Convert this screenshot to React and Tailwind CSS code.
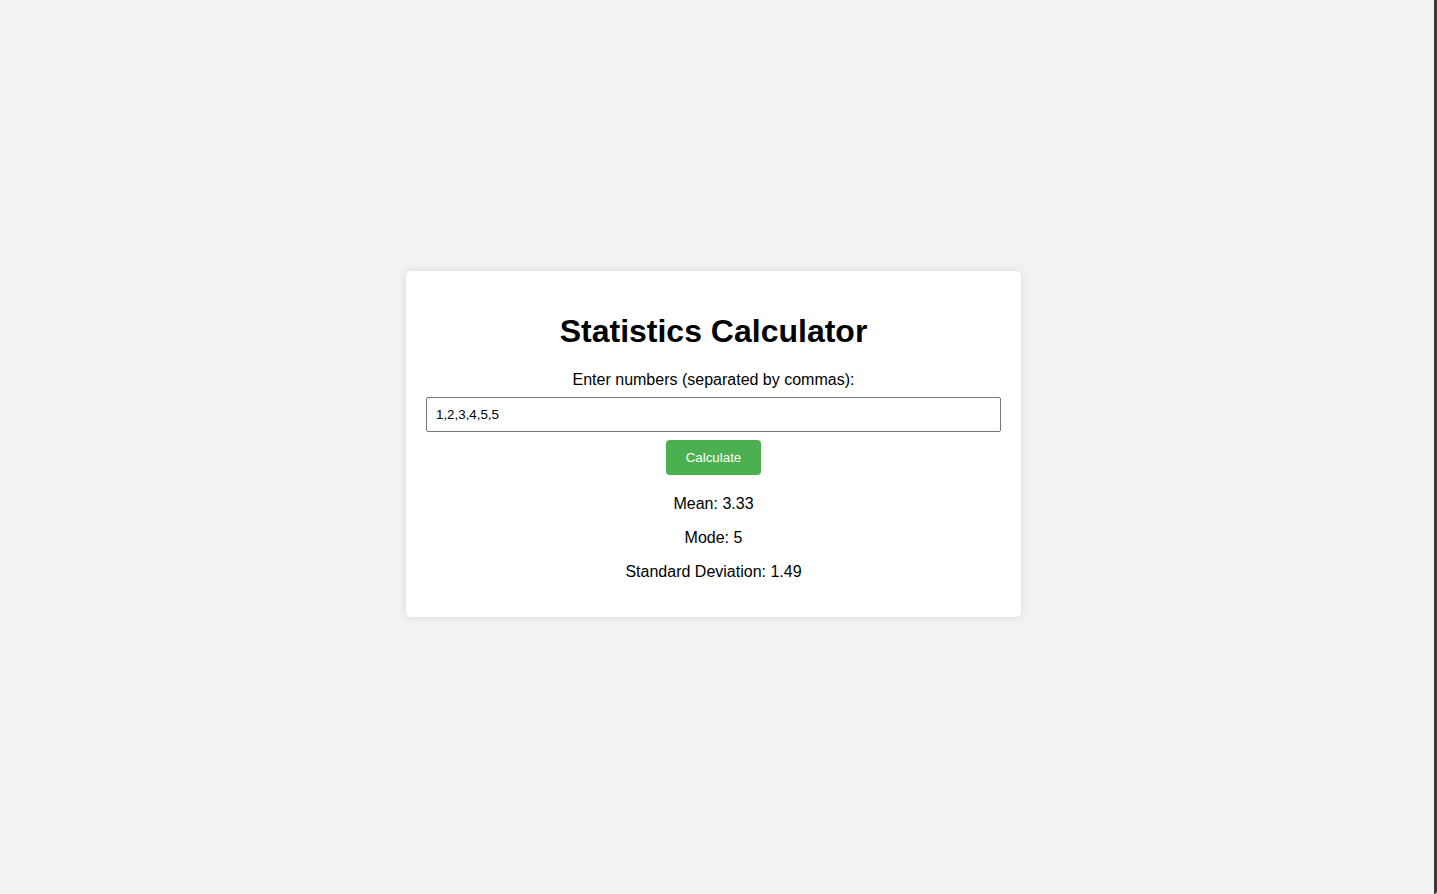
import React, { useState } from 'react';

function compute(text) {
  const nums = text.split(',').map((s) => parseFloat(s.trim())).filter((n) => !isNaN(n));
  if (!nums.length) return null;
  const mean = nums.reduce((a, b) => a + b, 0) / nums.length;
  const counts = {};
  nums.forEach((n) => { counts[n] = (counts[n] || 0) + 1; });
  let mode = nums[0];
  Object.keys(counts).forEach((k) => { if (counts[k] > counts[mode]) mode = Number(k); });
  const sd = Math.sqrt(nums.reduce((a, b) => a + (b - mean) ** 2, 0) / nums.length);
  return { mean: mean.toFixed(2), mode, sd: sd.toFixed(2) };
}

export default function App() {
  const [value, setValue] = useState('1,2,3,4,5,5');
  const [stats, setStats] = useState(() => compute('1,2,3,4,5,5'));

  return (
    <div className="flex h-[894px] w-full overflow-hidden bg-[#f2f2f2] font-['Liberation_Sans',Arial,sans-serif] text-black">
      <main className="flex flex-1 justify-center pr-[7px] pt-[271px]">
        <section className="h-fit w-[615px] rounded-[5px] bg-white p-5 text-center shadow-[0_0_10px_rgba(0,0,0,0.1)]">
          <h1 className="mb-[21px] mt-[22px] text-[32px] font-bold leading-[37px]">Statistics Calculator</h1>

          <label htmlFor="numbers" className="mb-[8px] block text-base leading-[18px]">
            Enter numbers (separated by commas):
          </label>
          <input
            id="numbers"
            value={value}
            onChange={(e) => setValue(e.target.value)}
            className="block h-[35px] w-full rounded-[2px] border border-[#767676] px-[9px] text-left text-[13.33px] outline-none"
          />

          <button
            onClick={() => setStats(compute(value))}
            className="mt-2 h-[35px] rounded-[4px] bg-[#4caf50] px-5 text-[13.33px] text-white"
          >
            Calculate
          </button>

          {stats && (
            <div className="mt-[20px] flex flex-col gap-4 text-base leading-[18px]">
              <p>Mean: {stats.mean}</p>
              <p>Mode: {stats.mode}</p>
              <p className="mb-4">Standard Deviation: {stats.sd}</p>
            </div>
          )}
        </section>
      </main>
      <div className="w-[3px] rounded-br-[3px] bg-[#3a3a3a]" />
    </div>
  );
}
